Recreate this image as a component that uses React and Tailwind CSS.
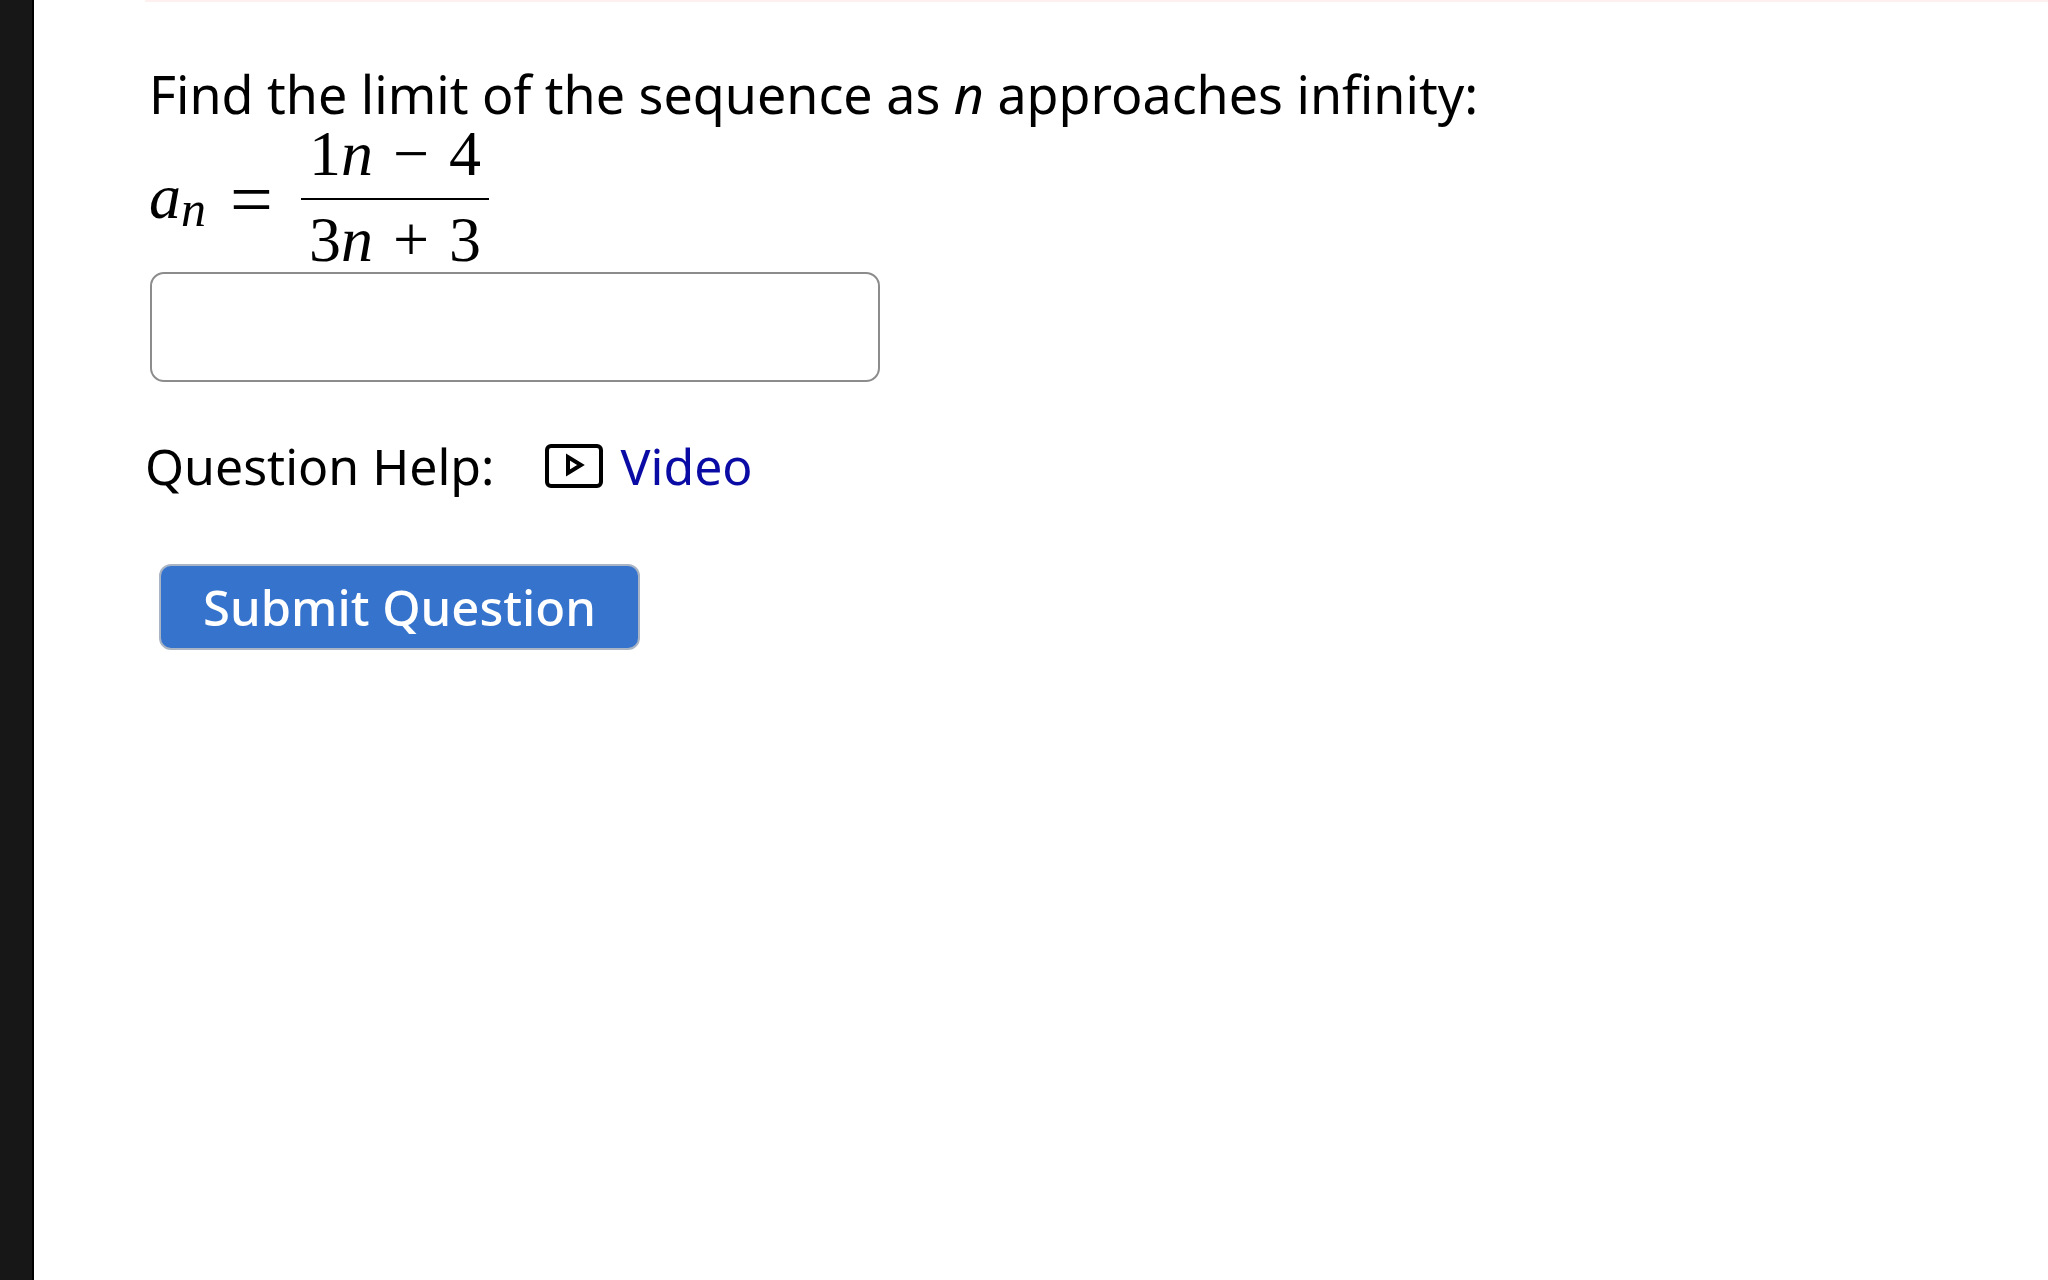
import React from 'react';

const Fraction = ({ top, bottom }) => (
    <span className="flex flex-col text-center">
        <span className="px-2 pb-[14px] leading-[60px] border-b-2 border-black">{top}</span>
        <span className="px-2 pt-[10px] leading-[60px]">{bottom}</span>
    </span>
);

const Operator = ({ children }) => <span className="mx-5">{children}</span>;

const VideoIcon = () => (
    <svg width="58" height="44" viewBox="0 0 58 44" fill="none" stroke="black" strokeWidth="4" strokeLinejoin="round" aria-hidden="true">
        <rect x="2" y="2" width="54" height="40" rx="4" />
        <path d="M23 13v16l13-8z" strokeWidth="4" strokeLinejoin="miter" />
    </svg>
);

const App = () => (
    <div className="flex min-h-screen bg-white text-black font-['Noto_Sans',sans-serif] text-[50px] leading-[60px]">
        <div className="w-[34px] bg-[#171717] border-r-2 border-black shrink-0" />
        <main className="flex-1 flex flex-col items-start ml-[111px] border-t-2 border-[#fff0f0]">
            <p id="prompt" className="mt-[62px] pl-1 text-[52px]">
                Find the limit of the sequence as <i>n</i> approaches infinity:
            </p>

            {/* Sequence formula */}
            <div className="flex items-center pl-1 font-['Liberation_Serif',serif] text-[64px]">
                <span className="leading-[60px]"><i>a</i></span>
                <span className="pt-6 text-[50px] leading-[50px]"><i>n</i></span>
                <span className="ml-6 mr-7 pt-1 text-[76px] leading-[60px]">=</span>
                <Fraction
                    top={<>1<i>n</i><Operator>−</Operator>4</>}
                    bottom={<>3<i>n</i><Operator>+</Operator>3</>}
                />
            </div>

            <input
                type="text"
                aria-labelledby="prompt"
                className="mt-[2px] ml-[5px] w-[730px] max-w-full h-[110px] px-4 rounded-[14px] border-2 border-[#8c8c8c] bg-white outline-none"
            />

            {/* Help links */}
            <div className="flex items-center mt-[54px]">
                <span>Question Help:</span>
                <a href="#video" className="flex items-center gap-[18px] ml-[50px] text-[#0a0aa5]">
                    <VideoIcon />
                    Video
                </a>
            </div>

            <button type="button" className="mt-[68px] ml-[14px] px-[42px] h-[86px] rounded-xl border-2 border-[#a9b4c4] bg-[#3573cc] text-white text-[49px] font-medium">
                Submit Question
            </button>
        </main>
    </div>
);

export default App;
